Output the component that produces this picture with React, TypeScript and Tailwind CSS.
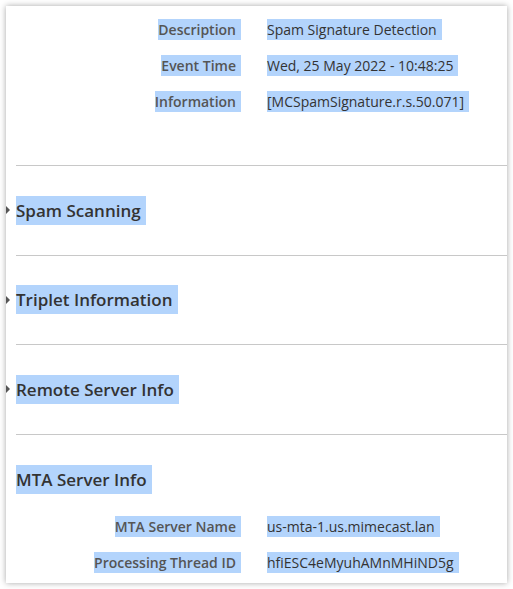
import React from 'react';

const rowsTop = [
  { label: 'Description', value: 'Spam Signature Detection' },
  { label: 'Event Time', value: 'Wed, 25 May 2022 - 10:48:25' },
  { label: 'Information', value: '[MCSpamSignature.r.s.50.071]' },
];

const rowsMta = [
  { label: 'MTA Server Name', value: 'us-mta-1.us.mimecast.lan' },
  { label: 'Processing Thread ID', value: 'hfiESC4eMyuhAMnMHiND5g' },
];

function InfoRow({ label, value }: { label: string; value: string }) {
  return (
    <div className="flex h-[36px] items-center">
      <div className="w-[235px] flex-shrink-0 text-right">
        <span className="inline-block h-[21px] bg-[#b3d4fc] pr-[5px] text-[14px] font-semibold leading-[21px] text-[#555]">
          {label}
        </span>
      </div>
      <div className="ml-[26px]">
        <span className="inline-block h-[21px] bg-[#b3d4fc] pr-[5px] text-[14px] leading-[21px] text-[#333]">
          {value}
        </span>
      </div>
    </div>
  );
}

function Heading({ title, arrow }: { title: string; arrow: boolean }) {
  return (
    <div className="flex items-center">
      <div className="flex w-[10px] flex-shrink-0 items-center">
        {arrow && (
          <div className="h-0 w-0 border-y-[4px] border-l-[4px] border-y-transparent border-l-[#555]" />
        )}
      </div>
      <span className="inline-block h-[29px] bg-[#b3d4fc] pr-[5px] text-[17px] font-semibold leading-[29px] text-[#333]">
        {title}
      </span>
    </div>
  );
}

function Divider() {
  return <div className="ml-[10px] h-px bg-[#c8c8c8]" />;
}

export default function App() {
  return (
    <div className="h-[589px] w-[513px] bg-white pl-[6px] pt-[6px]" style={{ fontFamily: '"Open Sans", "Noto Sans", sans-serif' }}>
      <div className="h-[577px] w-[501px] overflow-hidden bg-white shadow-[0_0_6px_rgba(0,0,0,0.35)]">
        {/* summary rows */}
        <div className="pb-[46px] pt-[5px]">
          {rowsTop.map((r) => (
            <InfoRow key={r.label} label={r.label} value={r.value} />
          ))}
        </div>

        {['Spam Scanning', 'Triplet Information', 'Remote Server Info'].map((t) => (
          <div key={t}>
            <Divider />
            <div className="flex h-[88.6px] items-center">
              <Heading title={t} arrow />
            </div>
          </div>
        ))}

        {/* expanded section */}
        <Divider />
        <div className="pt-[30px]">
          <Heading title="MTA Server Info" arrow={false} />
          <div className="mt-[14px]">
            {rowsMta.map((r) => (
              <InfoRow key={r.label} label={r.label} value={r.value} />
            ))}
          </div>
        </div>
      </div>
    </div>
  );
}
